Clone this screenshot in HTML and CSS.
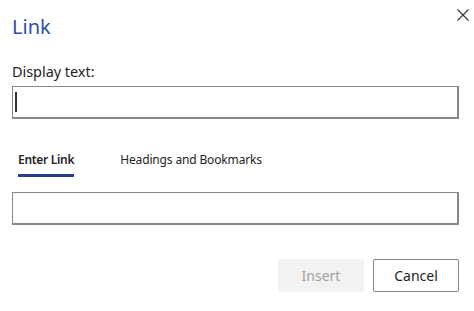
FILE: index.html
```html
<!DOCTYPE html>
<html lang="en">
<head>
<meta charset="utf-8">
<title>Link</title>
<link rel="stylesheet" href="styles.css">
</head>
<body>
<div class="dialog">
  <div class="header">
    <h1 class="title">Link</h1>
    <button class="close" aria-label="Close">
      <svg width="12" height="12" viewBox="0 0 12 12"><path d="M0.5 0.5 L11.5 11.5 M11.5 0.5 L0.5 11.5" stroke="#333" stroke-width="1.1" fill="none"/></svg>
    </button>
  </div>
  <div class="label">Display text:</div>
  <div class="input"><span class="caret"></span></div>
  <div class="tabs">
    <div class="tab active">Enter Link</div>
    <div class="tab">Headings and Bookmarks</div>
  </div>
  <div class="input second"></div>
  <div class="footer">
    <button class="btn insert">Insert</button>
    <button class="btn cancel">Cancel</button>
  </div>
</div>
</body>
</html>
```
FILE: styles.css
```css
html, body {
  margin: 0;
  padding: 0;
  background: #fff;
}
body {
  font-family: "Noto Sans", "Open Sans", sans-serif;
  color: #252423;
}
.dialog {
  width: 474px;
  height: 311px;
  box-sizing: border-box;
  padding: 0 15px 0 12px;
}
.header {
  display: flex;
  justify-content: space-between;
  align-items: flex-start;
  margin-right: -15px;
}
.title {
  margin: 13px 0 0 0;
  font-size: 20px;
  line-height: 28px;
  font-weight: 400;
  color: #2e50a0;
}
.close {
  width: 23px;
  height: 23px;
  margin-top: 3px;
  padding: 0;
  border: 0;
  background: transparent;
  display: flex;
  align-items: center;
  justify-content: center;
}
.label {
  margin-top: 20px;
  font-size: 14.5px;
  line-height: 20px;
  letter-spacing: -0.05px;
  color: #252423;
}
.input {
  margin-top: 5px;
  height: 33px;
  box-sizing: border-box;
  border: 1px solid #8a8886;
  border-right-width: 2px;
  border-bottom-width: 2px;
  display: flex;
  align-items: center;
  padding-left: 2px;
}
.caret {
  width: 1.5px;
  height: 20px;
  background: #333;
}
.tabs {
  display: flex;
  gap: 46px;
  margin: 32px 0 0 6px;
}
.tab {
  font-size: 12px;
  line-height: 18px;
  letter-spacing: -0.15px;
  padding-bottom: 5px;
  border-bottom: 3px solid transparent;
  color: #252423;
}
.tab.active {
  font-weight: 600;
  letter-spacing: -0.3px;
  border-bottom-color: #2b3d8f;
}
.input.second {
  margin-top: 15px;
}
.footer {
  display: flex;
  justify-content: flex-end;
  gap: 9px;
  margin-top: 34px;
}
.btn {
  width: 86px;
  height: 33px;
  box-sizing: border-box;
  font-family: "Noto Sans", "Open Sans", sans-serif;
  font-size: 14px;
  border-radius: 2px;
  padding: 0;
}
.insert {
  background: #f3f2f1;
  border: 1px solid #f3f2f1;
  color: #a19f9d;
}
.cancel {
  background: #fff;
  border: 1px solid #8a8886;
  color: #201f1e;
  font-weight: 400;
}
```
